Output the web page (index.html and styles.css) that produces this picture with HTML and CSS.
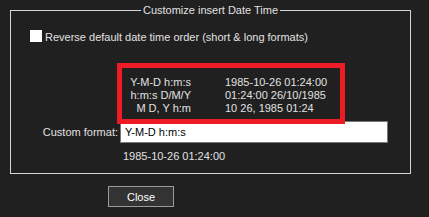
FILE: index.html
```html
<!DOCTYPE html>
<html>
<head>
<title>Customize insert Date Time</title>
<link rel="stylesheet" href="styles.css">
</head>
<body>
<div class="dialog">
    <fieldset class="group">
        <legend>Customize insert Date Time</legend>
        <label class="check"><span class="box"></span><span class="check-text">Reverse default date time order (short &amp; long formats)</span></label>
        <div class="formats">
            <span class="key">Y-M-D h:m:s</span><span>1985-10-26 01:24:00</span>
            <span class="key">h:m:s D/M/Y</span><span>01:24:00 26/10/1985</span>
            <span class="key">M D, Y h:m</span><span>10 26, 1985 01:24</span>
        </div>
        <div class="custom">
            <span class="custom-label">Custom format:</span>
            <span class="input">Y-M-D h:m:s</span>
        </div>
        <div class="preview">1985-10-26 01:24:00</div>
    </fieldset>
    <button class="close">Close</button>
    <!-- annotation drawn over the format list -->
    <div class="highlight"></div>
</div>
</body>
</html>
```

FILE: styles.css
```css
html, body {
    margin: 0;
    height: 100%;
}
body {
    background: #202020;
    color: #e0e0e0;
    font-family: "Liberation Sans", Arial, sans-serif;
    font-size: 11px;
    line-height: 16px;
}
.dialog {
    position: relative;
    padding-top: 2px;
    height: 100%;
    box-sizing: border-box;
}
.group {
    margin: 0 0 0 10px;
    padding: 0 0 9px 0;
    width: 401px;
    box-sizing: border-box;
    border: 1px solid #d4d4d4;
}
.group legend {
    margin: 0 auto;
    padding: 0 2px;
    line-height: 16px;
}
.check {
    display: flex;
    align-items: flex-start;
    margin: 10px 0 0 19px;
    height: 17px;
}
.box {
    width: 12px;
    height: 12px;
    background: #fff;
    margin: 2px 3px 0 0;
}
.check-text {
    padding-top: 1px;
}
.formats {
    display: grid;
    grid-template-columns: 80px auto;
    column-gap: 34px;
    margin: 31px 0 0 100px;
    line-height: 13px;
}
.key {
    text-align: right;
}
.custom {
    display: flex;
    align-items: center;
    margin-top: 6px;
}
.custom-label {
    width: 107px;
    text-align: right;
    margin-right: 2px;
}
.input {
    width: 268px;
    height: 22px;
    box-sizing: border-box;
    background: #fff;
    color: #000;
    border: 1px solid #7a7a7a;
    padding: 2px 4px;
}
.preview {
    margin: 5px 0 0 112px;
}
.close {
    display: block;
    margin: 12px 0 0 108px;
    width: 66px;
    height: 21px;
    background: #333;
    color: #fff;
    border: 1px solid #9b9b9b;
    font: inherit;
    padding: 0;
}
.highlight {
    position: absolute;
    left: 117px;
    top: 63px;
    width: 228px;
    height: 61px;
    box-sizing: border-box;
    border: 5px solid #ed1c24;
}
```
